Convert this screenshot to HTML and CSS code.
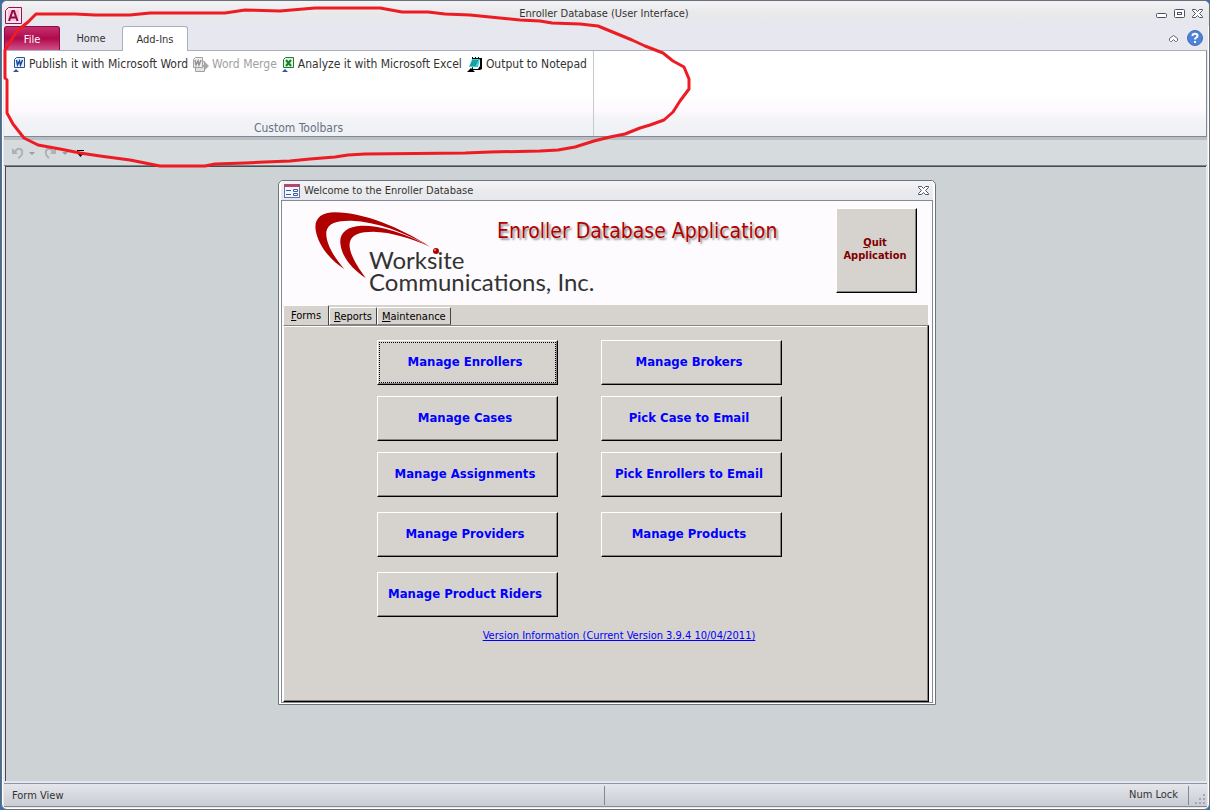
FILE: index.html
```
<!DOCTYPE html>
<html lang="en">
<head>
  <meta charset="UTF-8" />
  <meta name="viewport" content="width=device-width, initial-scale=1.0" />
  <title>Enroller Database (User Interface)</title>
  <link rel="stylesheet" href="styles.css">
</head>
<body>
<div class="app">

  <!-- Title bar -->
  <header class="title-bar">
    <svg class="app-icon" width="17" height="17" viewBox="0 0 17 17">
      <path d="M3.5 .5h13v16H.5v-13z" fill="#fbe3ee" stroke="#9c0f50"/>
      <path d="M4 3h10v11H3V4z" fill="#f6c3d9"/>
      <path d="M4 14L7.500 4h1.500L12.500 14M5.500 10.500h6" fill="none" stroke="#8c0a45" stroke-width="2"/>
    </svg>
    <h1>Enroller Database (User Interface)</h1>
    <div class="window-buttons">
      <button type="button" aria-label="Minimize">
        <svg width="11" height="11" viewBox="0 0 11 11"><rect x=".5" y="5.5" width="10" height="4" rx="1" fill="#fff" stroke="#4a5266"/></svg>
      </button>
      <button type="button" aria-label="Restore">
        <svg width="11" height="11" viewBox="0 0 11 11"><rect x=".5" y="1.5" width="10" height="8" rx="1" fill="#fff" stroke="#4a5266"/><rect x="3.5" y="4.5" width="4" height="2" fill="#fff" stroke="#4a5266"/></svg>
      </button>
      <button type="button" aria-label="Close">
        <svg width="11" height="11" viewBox="0 0 11 11"><path d="M.5 1.5h3l2 2 2-2h3v1l-3 3 3 3v1h-3l-2-2-2 2h-3v-1l3-3-3-3z" fill="#fff" stroke="#4a5266"/></svg>
      </button>
    </div>
  </header>

  <!-- Ribbon tabs -->
  <nav class="ribbon-tabs">
    <button type="button" class="tab file">File</button>
    <button type="button" class="tab home">Home</button>
    <button type="button" class="tab active">Add-Ins</button>
    <div class="ribbon-help">
      <button type="button" aria-label="Minimize the Ribbon">
        <svg width="9" height="7" viewBox="0 0 9 7"><path d="M.5 5.5v-2l4-3 4 3v2l-1 1h-1l-2-2-2 2h-1z" fill="#fff" stroke="#5b6270"/></svg>
      </button>
      <button type="button" aria-label="Help">
        <svg width="16" height="16" viewBox="0 0 16 16">
          <circle cx="8" cy="8" r="7.5" fill="#4d82d6" stroke="#3f6fbd"/>
          <path d="M5.500 6Q5.500 3.700 8 3.700T10.500 6Q10.500 7.200 9 7.900Q8 8.400 8 9.600" fill="none" stroke="#fff" stroke-width="2"/>
          <rect x="7" y="11" width="2" height="2" fill="#fff"/>
        </svg>
      </button>
    </div>
  </nav>

  <!-- Ribbon -->
  <section class="ribbon">
    <div class="group">
      <div class="commands">
        <button type="button">
          <svg width="13" height="15" viewBox="0 0 13 15">
            <path d="M3.500 .5h8v10h-10v-8z" fill="#e8f0fb" stroke="#2a5298"/>
            <path d="M3.500 3l1 5 2-4 1 4 2-5" fill="none" stroke="#1c4aa0" stroke-width="1.500"/>
            <path d="M0 15l3-3 3 3z" fill="#2f55a4"/>
          </svg>
          <span>Publish it with Microsoft Word</span>
        </button>
        <button type="button" disabled>
          <svg width="16" height="15" viewBox="0 0 16 15">
            <path d="M2.500 4.500h9v10h-9z" fill="#e4e2e4" stroke="#a3a0a3"/>
            <path d="M2.500 .5h7v10h-9v-8z" fill="#f0eff0" stroke="#a3a0a3"/>
            <path d="M2 3l1 5 2-4 1 4 2-5" fill="none" stroke="#959295" stroke-width="1.500"/>
            <path d="M9 8h3V5l4 4-4 4v-3H9z" fill="#aaa7aa"/>
          </svg>
          <span>Word Merge</span>
        </button>
        <button type="button">
          <svg width="13" height="15" viewBox="0 0 13 15">
            <path d="M3.500 .5h8v10h-10v-8z" fill="#e2f2df" stroke="#1f7a33"/>
            <path d="M4 3l5 6M9 3l-5 6" stroke="#16842c" stroke-width="2"/>
            <path d="M0 15l3-3 3 3z" fill="#2f55a4"/>
          </svg>
          <span>Analyze it with Microsoft Excel</span>
        </button>
        <button type="button">
          <svg width="16" height="15" viewBox="0 0 16 15">
            <path d="M6 1h9v11l-2 1H5z" fill="#000"/>
            <path d="M12 3h1v6l-2 3H6v-2h4z" fill="#fff"/>
            <path d="M5 2h8l-2 8H2z" fill="#2fd6dc"/>
            <path d="M5 4h6M4 6h6M3 8h6" stroke="#0a6a70"/>
            <path d="M5 0h1v2H5zM8 0h1v2H8zM11 0h1v2h-1z" fill="#000"/>
            <path d="M0 15l4-4 4 4z" fill="#000"/>
          </svg>
          <span>Output to Notepad</span>
        </button>
      </div>
      <div class="group-label">Custom Toolbars</div>
    </div>
  </section>

  <!-- Quick access toolbar -->
  <div class="quick-access">
    <button type="button" aria-label="Undo" disabled>
      <svg width="24" height="14" viewBox="0 0 24 14">
        <path d="M1 2v6h6z" fill="#aeb0b5"/>
        <path d="M4 6 Q6 2 9 3 Q12 4 11 8 Q10 11 7 12" fill="none" stroke="#aeb0b5" stroke-width="2"/>
        <path d="M18 6h6l-3 3z" fill="#9a9da3"/>
      </svg>
    </button>
    <button type="button" aria-label="Redo" disabled>
      <svg width="24" height="14" viewBox="0 0 24 14">
        <path d="M12 2v6H6z" fill="#aeb0b5"/>
        <path d="M9 6 Q7 2 4 3 Q1 4 2 8 Q3 11 5 12" fill="none" stroke="#aeb0b5" stroke-width="2"/>
        <path d="M18 6h6l-3 3z" fill="#9a9da3"/>
      </svg>
    </button>
    <button type="button" aria-label="Customize Quick Access Toolbar">
      <svg width="7" height="8" viewBox="0 0 7 8"><path d="M0 1h7v1H0zM0 4h7L3.500 8z" fill="#000"/></svg>
    </button>
  </div>

  <!-- Workspace with the start form -->
  <main class="workspace">
    <section class="form-window">
      <div class="form-title">
        <svg width="16" height="14" viewBox="0 0 16 14">
          <rect x=".5" y=".5" width="15" height="13" fill="#f4f7fc" stroke="#5a76ad"/>
          <path d="M0 0h16v3H0z" fill="#b5446f"/>
          <path d="M2 6.500h5M2 10.500h5" stroke="#3b5ca0"/>
          <path d="M9.500 5.500h4v2h-4zM9.500 9.500h4v2h-4z" fill="#fff" stroke="#3b5ca0"/>
        </svg>
        <h2>Welcome to the Enroller Database</h2>
        <button type="button" aria-label="Close form">
          <svg width="11" height="11" viewBox="0 0 11 11"><path d="M.5 1.500h3l2 2 2-2h3v1l-3 3 3 3v1h-3l-2-2-2 2h-3v-1l3-3-3-3z" fill="#fff" stroke="#4a5266"/></svg>
        </button>
      </div>

      <div class="form-body">
        <div class="form-header">
          <div class="logo">
            <svg class="swoosh" width="130" height="72" viewBox="45 21 390 216">
              <g fill="#b00000">
                <path d="M390 125C300 68 190 22 105 22C62 22 42 42 47 75C54 120 90 165 133 192C100 155 76 112 79 80C83 53 115 46 155 47C230 50 310 80 390 125z"/>
                <path d="M390 125C310 82 240 61 185 62C140 64 118 84 121 115C125 158 160 195 197 219C165 175 146 140 149 115C153 88 180 80 220 80C275 82 330 98 390 125z"/>
                <circle cx="408" cy="138" r="9"/>
              </g>
              <circle cx="405" cy="135" r="3" fill="#e88"/>
            </svg>
            <div class="logo-text">Worksite<br>Communications, Inc.</div>
          </div>
          <h3>Enroller Database Application</h3>
          <button type="button" class="quit"><u>Q</u>uit<br>Application</button>
        </div>

        <div class="form-tabs">
          <button type="button" class="form-tab selected"><u>F</u>orms</button>
          <button type="button" class="form-tab"><u>R</u>eports</button>
          <button type="button" class="form-tab"><u>M</u>aintenance</button>
        </div>

        <div class="panel">
          <div class="menu">
            <button type="button" class="focused">Manage Enrollers</button>
            <button type="button">Manage Brokers</button>
            <button type="button">Manage Cases</button>
            <button type="button">Pick Case to Email</button>
            <button type="button">Manage Assignments</button>
            <button type="button">Pick Enrollers to Email</button>
            <button type="button">Manage Providers</button>
            <button type="button">Manage Products</button>
            <button type="button">Manage Product Riders</button>
          </div>
          <a class="version" href="#">Version Information (Current Version 3.9.4 10/04/2011)</a>
        </div>
      </div>
    </section>
  </main>

  <footer class="status-bar">
    <span class="view">Form View</span>
    <div class="status-right">
      <span class="num-lock">Num Lock</span>
      <svg class="grip" width="11" height="11" viewBox="0 0 11 11">
        <path d="M8 0h2v2H8zM4 4h2v2H4zM8 4h2v2H8zM0 8h2v2H0zM4 8h2v2H4zM8 8h2v2H8z" fill="#a0a7b8"/>
      </svg>
    </div>
  </footer>
</div>

<!-- Hand drawn marker around the ribbon -->
<svg class="marker" width="700" height="180" viewBox="0 0 700 180">
  <path d="M40 14 L75 14 L95 15 L130 15 L150 13 L225 13 L245 10 L280 11 L315 8 L380 8 L402 12 L428 12 L445 14 L470 15 L500 18 L520 20 L540 21 L552 23 L580 24 L598 26 L615 33 L632 40 L645 46 L663 53 L673 61 L684 67 L689 79 L689 89 L680 101 L673 112 L664 120 L650 125 L640 128 L625 134 L610 137 L594 141 L575 147 L558 150 L540 151 L490 152 L465 153 L365 154 L348 155 L335 157 L310 159 L290 161 L265 162 L245 163 L215 164 L205 166 L160 166 L150 164 L130 160 L100 156 L80 153 L60 149 L38 145 L24 138 L13 124 L7 113 L7 80 L5 78 L5 50 L10 42 L17 31 L28 22 L36 14z"/>
</svg>
</body>
</html>
```
FILE: styles.css
```
* {
  box-sizing: border-box;
}
body {
  margin: 0;
  background: #3a6ea5;
  font-family: "DejaVu Sans Condensed", "DejaVu Sans", sans-serif;
  font-stretch: condensed;
  font-size: 11px;
  color: #333;
}
h1, h2, h3 {
  margin: 0;
  font-weight: normal;
}
button {
  margin: 0;
  padding: 0;
  border: none;
  background: none;
  font: inherit;
  color: inherit;
}
svg {
  display: block;
  flex: none;
}

.app {
  display: flex;
  flex-direction: column;
  min-height: 100vh;
  margin-left: 1px;
  border: 1px solid #6a7078;
  border-radius: 6px;
  background: #e6e7ef;
  box-shadow: inset 0 0 0 1px #fff;
  overflow: hidden;
}

/* title bar */
.title-bar {
  display: flex;
  align-items: center;
  height: 25px;
  padding: 0 6px 0 3px;
  background: linear-gradient(#f3f3f7, #e9e9ea 50%, #e6e7ef);
}
.title-bar h1 {
  flex: 1;
  text-align: center;
  font-size: 11px;
}
.app-icon {
  margin-top: 3px;
}
.window-buttons {
  display: flex;
  gap: 7px;
  width: 47px;
  margin-left: -30px;
}

/* ribbon tabs */
.ribbon-tabs {
  display: flex;
  align-items: flex-end;
  height: 24px;
  padding: 0 6px 0 2px;
}
.tab {
  height: 24px;
  padding-top: 1px;
}
.tab.file {
  width: 56px;
  border: 1px solid #8c0a45;
  border-bottom: none;
  border-radius: 3px 3px 0 0;
  background: linear-gradient(#c4306f, #b00a4c 50%, #d0508a);
  color: #fff;
}
.tab.home {
  width: 62px;
}
.tab.active {
  position: relative;
  height: 25px;
  margin-bottom: -1px;
  width: 66px;
  border: 1px solid #a9b0bb;
  border-bottom: none;
  border-radius: 3px 3px 0 0;
  background: #fff;
}
.ribbon-help {
  display: flex;
  align-items: center;
  gap: 9px;
  height: 24px;
  margin-left: auto;
}

/* ribbon */
.ribbon {
  display: flex;
  height: 87px;
  margin: 0 2px;
  border-top: 1px solid #a9b0bb;
  border-bottom: 1px solid #83888f;
  border-right: 1px solid #83888f;
  background: linear-gradient(#fff 50%, #fdf9fe 70%, #f4f4f7 78%, #edf0f5);
}
.group {
  display: flex;
  flex-direction: column;
  justify-content: space-between;
  width: 590px;
  border-right: 1px solid #c6c9ce;
  font-size: 12px;
}
.commands {
  display: flex;
  gap: 5px;
  padding: 5px 0 0 9px;
}
.commands button {
  display: flex;
  align-items: center;
  gap: 3px;
  height: 16px;
  white-space: nowrap;
}
.commands button:disabled {
  color: #a0a0a4;
}
.group-label {
  padding-bottom: 1px;
  text-align: center;
  color: #6b7180;
}

/* quick access toolbar */
.quick-access {
  display: flex;
  align-items: center;
  gap: 9px;
  height: 29px;
  margin: 0 2px;
  padding: 0 7px;
  border-top: 3px solid #b9bec4;
  border-bottom: 1px solid #7c848c;
  background: #d6dbde;
}

/* workspace */
.workspace {
  display: flex;
  justify-content: center;
  align-items: flex-start;
  flex: 1;
  margin: 0 3px;
  padding: 13px 0 20px 2px;
  border-top: 1px solid #444a4e;
  border-left: 1px solid #444a4e;
  background: #cdd3d5;
}
.form-window {
  width: 658px;
  padding: 0 2px 1px;
  border: 1px solid #6b757d;
  border-radius: 5px 5px 0 0;
  background: #fff;
}
.form-title {
  display: flex;
  align-items: center;
  gap: 4px;
  height: 19px;
  padding: 0 4px 0 3px;
  background: linear-gradient(#f6f6fa, #ebebed 50%, #e6e8ef);
}
.form-title h2 {
  flex: 1;
  font-size: 11px;
}
.form-body {
  padding: 0 4px 0 1px;
  border: 1px solid #838a92;
  background: #fdfbfe;
}

/* form header */
.form-header {
  display: flex;
  align-items: flex-start;
  height: 104px;
  padding: 7px 11px 0 32px;
}
.logo {
  display: grid;
  width: 182px;
}
.logo > * {
  grid-area: 1 / 1;
}
.swoosh {
  margin-top: 4px;
}
.logo-text {
  padding: 41px 0 0 54px;
  font-family: Lato, sans-serif;
  font-size: 24px;
  line-height: 22px;
  color: #333;
  white-space: nowrap;
}
.form-header h3 {
  flex: 1;
  padding-top: 10px;
  font-size: 21px;
  line-height: 26px;
  color: #b00000;
  text-shadow: 2px 2px 2px #999;
  white-space: nowrap;
}
.quit {
  width: 81px;
  height: 85px;
  padding: 0 3px 3px 0;
  border: 1px solid;
  border-color: #fff #000 #000 #fff;
  background: #d6d3ce;
  box-shadow: inset -1px -1px 0 #848284;
  font-weight: bold;
  line-height: 13px;
  color: #800000;
}

/* form tabs */
.form-tabs {
  display: flex;
  align-items: flex-end;
  height: 20px;
  background: #d6d3ce;
  color: #000;
}
.form-tab {
  height: 18px;
  padding: 0 4px;
  border: 1px solid;
  border-color: #fff #444 #848284 #fff;
  border-radius: 2px 2px 0 0;
}
.form-tab.selected {
  height: 20px;
  padding: 0 7px;
  border-bottom: none;
}

/* menu panel */
.panel {
  display: flex;
  flex-direction: column;
  align-items: center;
  height: 377px;
  margin-right: -1px;
  padding-top: 14px;
  border: 1px solid;
  border-color: #848284 #000 #000 #fff;
  background: #d6d3ce;
  box-shadow: inset -1px -1px 0 #848284, inset 0 1px 0 #fff;
}
.menu {
  display: grid;
  grid-template-columns: 181px 181px;
  grid-template-rows: 45px 45px 49px 49px 45px;
  gap: 11px 43px;
  margin-right: 54px;
}
.menu button {
  height: 45px;
  padding: 0 4px 2px 0;
  border: 1px solid;
  border-color: #fff #000 #000 #fff;
  box-shadow: inset -1px -1px 0 #848284;
  font-size: 13px;
  font-weight: bold;
  color: #00f;
}
.menu .focused {
  outline: 1px dotted #000;
  outline-offset: -3px;
}
.version {
  margin: 12px 0 0 26px;
  color: #00f;
}

/* status bar */
.status-bar {
  display: flex;
  align-items: center;
  height: 24px;
  margin: 2px;
  border-top: 1px solid #8e94a3;
  border-bottom: 1px solid #83888f;
  background: linear-gradient(#e4e6eb, #c9ccd3);
}
.view {
  width: calc(50% - 2px);
  padding-left: 8px;
}
.status-right {
  display: flex;
  flex: 1;
  border-left: 1px solid #83888f;
}
.num-lock {
  flex: 1;
  padding-right: 10px;
  border-right: 1px solid #83888f;
  line-height: 18px;
  text-align: right;
}
.grip {
  margin: 8px 1px 0 6px;
}

/* marker lies over the ribbon */
.marker {
  position: absolute;
  top: 0;
  left: 0;
  pointer-events: none;
}
.marker path {
  fill: none;
  stroke: #ed1c24;
  stroke-width: 3;
  stroke-linejoin: round;
}
```
